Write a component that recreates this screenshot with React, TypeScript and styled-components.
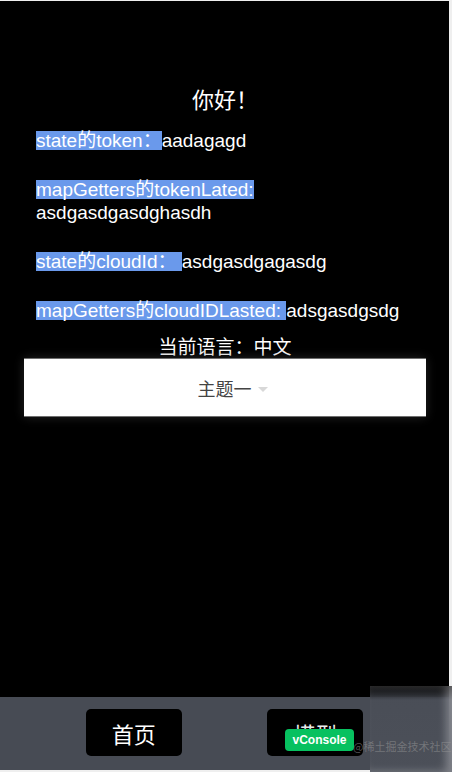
import React from "react";
import styled, { createGlobalStyle } from "styled-components";

const Global = createGlobalStyle`
  html, body { margin: 0; padding: 0; background: #efefef; }
  body { font-family: "Liberation Sans", Arial, "Noto Sans CJK SC", sans-serif; }
  * { box-sizing: border-box; }
`;

const Page = styled.div`
  position: relative;
  width: 449px;
  height: 769px;
  margin-top: 1px;
  background: #000;
  display: flex;
  flex-direction: column;
  overflow: hidden;
`;

const Main = styled.main`
  flex: 1;
  display: flex;
  flex-direction: column;
  padding: 87px 23px 0 24px;
  color: #fff;
`;

const Title = styled.h1`
  margin: 0 0 15px;
  font-size: 22px;
  line-height: 26px;
  font-weight: 400;
  text-align: center;
  font-family: "Liberation Sans", "Noto Sans CJK SC", sans-serif;
`;

const Info = styled.div`
  display: flex;
  flex-direction: column;
  gap: 26px;
  padding-left: 12px;
`;

const Line = styled.p`
  margin: 0;
  font-size: 19px;
  line-height: 23px;
  font-family: "Liberation Sans", "Noto Sans CJK SC", sans-serif;
`;

const Mark = styled.span`
  display: inline-block;
  background: #6a99eb;
  line-height: 19px;
  height: 19px;
  white-space: pre;
`;

const Value = styled.span<{ $block?: boolean }>`
  display: ${(p) => (p.$block ? "block" : "inline")};
`;

const Lang = styled.p`
  margin: 15px 0 0;
  font-size: 19px;
  line-height: 21px;
  text-align: center;
  font-family: "Liberation Sans", "Noto Sans CJK SC", sans-serif;
`;

const Select = styled.div`
  height: 59px;
  background: #fff;
  border-top: 1px solid #6e6e6e;
  border-bottom: 1px solid #6e6e6e;
  box-shadow: 0 0 10px rgba(60, 60, 60, 0.6);
  display: flex;
  align-items: center;
  justify-content: center;
  gap: 6px;
  padding-left: 15px;
  color: #444;
  font-size: 18px;
  font-family: "Noto Sans CJK SC", sans-serif;
`;

const Caret = styled.span`
  width: 0;
  height: 0;
  border-left: 5px solid transparent;
  border-right: 5px solid transparent;
  border-top: 5px solid #d8d8d8;
  margin-top: 3px;
`;

const TabBar = styled.nav`
  height: 73px;
  background: #474b54;
  display: flex;
  justify-content: space-evenly;
  align-items: flex-start;
  padding-top: 12px;
`;

const Tab = styled.button`
  width: 96px;
  height: 47px;
  border: none;
  border-radius: 5px;
  background: #000;
  color: #fff;
  font-size: 22px;
  font-family: "Noto Sans CJK SC", sans-serif;
  padding: 0;
`;

const VConsole = styled.div`
  position: absolute;
  left: 285px;
  top: 729px;
  width: 69px;
  height: 22px;
  border-radius: 4px;
  background: #07c160;
  color: #fff;
  font-size: 12px;
  font-weight: 600;
  display: flex;
  align-items: center;
  justify-content: center;
  font-family: "Liberation Sans", Arial, sans-serif;
  box-shadow: 0 0 6px rgba(0, 0, 0, 0.3);
`;

const Shade = styled.div`
  position: absolute;
  left: 370px;
  top: 686px;
  width: 82px;
  height: 86px;
  background: linear-gradient(to bottom, rgba(0,0,0,0.9) 0px, rgba(74,78,87,0.9) 14px, #4c5059 100%);
  box-shadow: inset -6px 0 8px rgba(190, 190, 195, 0.45);
  pointer-events: none;
`;

const Watermark = styled.div`
  position: absolute;
  left: 353px;
  top: 738px;
  font-size: 11px;
  color: rgba(150, 150, 150, 0.55);
  font-family: "Noto Sans CJK SC", sans-serif;
  white-space: nowrap;
`;

const Wrap = styled.div`
  position: relative;
  width: 452px;
  height: 772px;
  overflow: hidden;
`;

export default function App() {
  return (
    <Wrap>
      <Global />
      <Page>
        <Main>
          <Title>你好！</Title>
          <Info>
            <Line>
              <Mark>state的token：</Mark>aadagagd
            </Line>
            <Line>
              <Mark>mapGetters的tokenLated:</Mark>
              <Value $block>asdgasdgasdghasdh</Value>
            </Line>
            <Line>
              <Mark>state的cloudId： </Mark>asdgasdgagasdg
            </Line>
            <Line>
              <Mark>mapGetters的cloudIDLasted: </Mark>adsgasdgsdg
            </Line>
          </Info>
          <Lang>当前语言：中文</Lang>
          <Select>
            主题一
            <Caret />
          </Select>
        </Main>
        <TabBar>
          <Tab>首页</Tab>
          <Tab>模型</Tab>
        </TabBar>
      </Page>
      <Shade />
      <VConsole>vConsole</VConsole>
      <Watermark>@稀土掘金技术社区</Watermark>
    </Wrap>
  );
}
